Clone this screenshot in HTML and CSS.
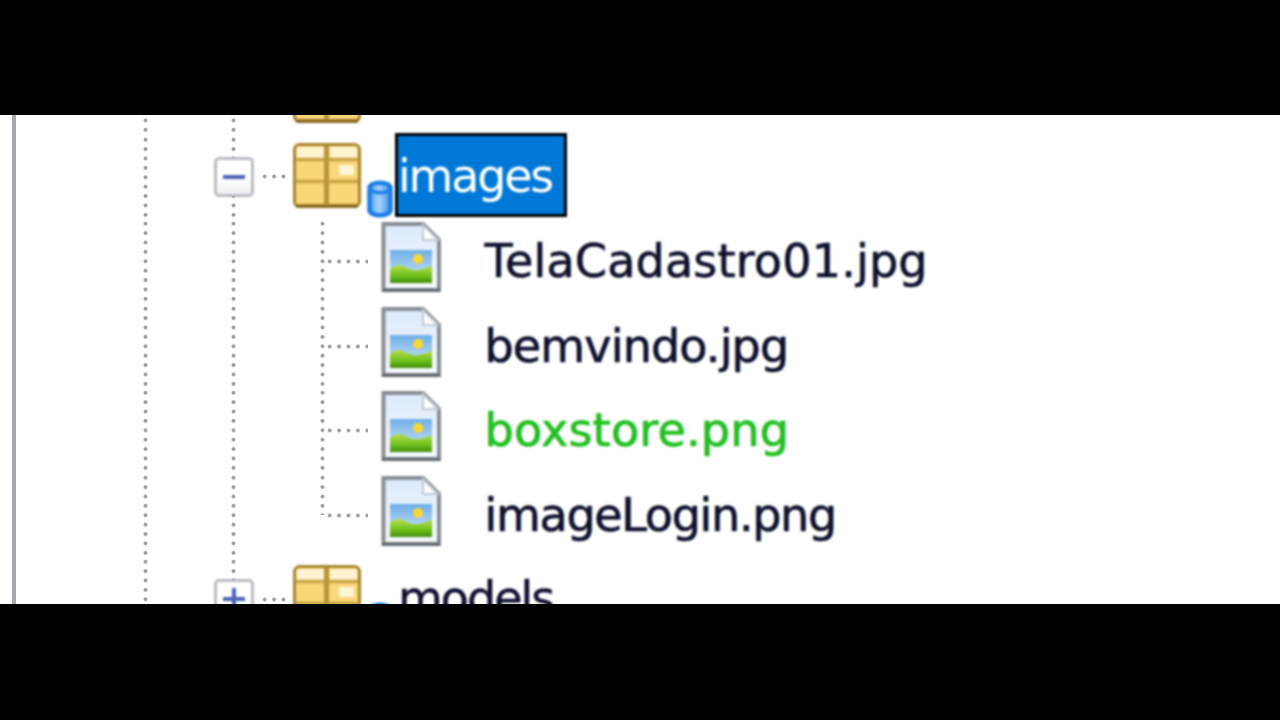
FILE: index.html
```html
<!DOCTYPE html>
<html lang="pt">
  <head>
    <meta charset="UTF-8" />
    <title>images</title>
    <link rel="stylesheet" href="styles.css">
  </head>

  <body>
    <svg class="defs" width="0" height="0" aria-hidden="true">
      <defs>
        <linearGradient id="sheet" x1="0" y1="0" x2="0" y2="1">
          <stop offset="0" stop-color="#dbeafb"/>
          <stop offset="1" stop-color="#f7f9fc"/>
        </linearGradient>
        <linearGradient id="sky" x1="0" y1="0" x2="0" y2="1">
          <stop offset="0" stop-color="#6eaee8"/>
          <stop offset="1" stop-color="#d6eaf8"/>
        </linearGradient>
        <linearGradient id="grass" x1="0" y1="0" x2="0" y2="1">
          <stop offset="0" stop-color="#b5e04a"/>
          <stop offset="0.6" stop-color="#6fc01c"/>
          <stop offset="1" stop-color="#3f8c0c"/>
        </linearGradient>
        <linearGradient id="can" x1="0" y1="0" x2="1" y2="0">
          <stop offset="0" stop-color="#4a9cee"/>
          <stop offset="0.45" stop-color="#a8d4f8"/>
          <stop offset="1" stop-color="#3f94ea"/>
        </linearGradient>
      </defs>
      <symbol id="folder" viewBox="0 0 68 65">
        <rect x="1.500" y="1.500" width="65" height="62" rx="5" fill="#f9d678" stroke="#a5852f" stroke-width="3"/>
        <path d="M3 63H65" stroke="#86691c" stroke-width="3.500"/>
        <rect x="4" y="4" width="28" height="11" fill="#fff3d2"/>
        <rect x="37" y="4" width="27" height="11" fill="#fff3d2"/>
        <path d="M3 16.500H65M3 38.500H65" stroke="#c9a544" stroke-width="3.500" fill="none"/>
        <path d="M33.500 3V62" stroke="#b8943a" stroke-width="5" fill="none"/>
        <rect x="46" y="22" width="15" height="10" fill="#fff6d8"/>
      </symbol>
      <symbol id="cylinder" viewBox="0 0 26 38">
        <path d="M2.500 8C2.500 1 23.500 1 23.500 8V30C23.500 37 2.500 37 2.500 30Z" fill="url(#can)" stroke="#1c7de6" stroke-width="4.500"/>
        <path d="M3 9C8 14 18 14 24 9" fill="none" stroke="#1c7de6" stroke-width="3.500"/>
      </symbol>
      <symbol id="picture" viewBox="0 0 60 70">
        <path d="M2.500 2H42L58 18V68H2.500Z" fill="url(#sheet)" stroke="#878d94" stroke-width="4"/>
        <path d="M1 68.500H59" stroke="#646970" stroke-width="3.500"/>
        <path d="M42 3V18H57Z" fill="#fff" stroke="#c4c9cf" stroke-width="2"/>
        <rect x="9" y="28" width="42" height="33" fill="url(#sky)"/>
        <circle cx="37" cy="37" r="5" fill="#f7d92e"/>
        <path d="M9 47C16 41 22 43 28 47C35 50 43 47 51 44V61H9Z" fill="url(#grass)"/>
      </symbol>
    </svg>

    <main class="panel">
      <div class="tree">
        <!-- carpeta anterior, solo asoma por arriba -->
        <div class="row">
          <span class="guide"></span>
          <span class="expander"></span>
          <span class="folder"><svg class="icon"><use href="#folder"/></svg></span>
        </div>

        <div class="row">
          <span class="guide"></span>
          <span class="expander">
            <span class="toggle"><span class="minus"></span></span>
            <span class="stub"></span>
          </span>
          <span class="folder">
            <svg class="icon"><use href="#folder"/></svg>
            <svg class="badge"><use href="#cylinder"/></svg>
          </span>
          <span class="label selected">images</span>
        </div>

        <div class="row">
          <span class="guide"></span>
          <span class="guide"></span>
          <span class="branch"></span>
          <svg class="file"><use href="#picture"/></svg>
          <span class="name name-tela">TelaCadastro01.jpg</span>
        </div>
        <div class="row">
          <span class="guide"></span>
          <span class="guide"></span>
          <span class="branch"></span>
          <svg class="file"><use href="#picture"/></svg>
          <span class="name name-bem">bemvindo.jpg</span>
        </div>
        <div class="row">
          <span class="guide"></span>
          <span class="guide"></span>
          <span class="branch"></span>
          <svg class="file"><use href="#picture"/></svg>
          <span class="name name-box added">boxstore.png</span>
        </div>
        <div class="row">
          <span class="guide"></span>
          <span class="guide"></span>
          <span class="branch last"></span>
          <svg class="file"><use href="#picture"/></svg>
          <span class="name name-login">imageLogin.png</span>
        </div>

        <div class="row">
          <span class="guide"></span>
          <span class="expander end">
            <span class="toggle"><span class="minus"></span><span class="plus"></span></span>
            <span class="stub"></span>
          </span>
          <span class="folder">
            <svg class="icon"><use href="#folder"/></svg>
            <svg class="badge"><use href="#cylinder"/></svg>
          </span>
          <span class="label">models</span>
        </div>
      </div>
    </main>
  </body>
</html>
```

FILE: styles.css
```css
html {
  box-sizing: border-box;
  font-family: "DejaVu Sans", Verdana, sans-serif;
}

*,
*:before,
*:after {
  box-sizing: inherit;
}

body {
  margin: 0;
  height: 720px;
  background-color: #000;
  overflow: hidden;
}

.defs {
  position: absolute;
}

/* zona blanca entre las dos franjas negras */
.panel {
  margin-top: 115px;
  height: 489px;
  padding-left: 12px;
  background-color: #fff;
  overflow: hidden;
}

.tree {
  display: flow-root;
  height: 100%;
  border-left: 4px solid #a6a9ae;
  padding-left: 126.5px;
}

.row {
  display: flex;
  height: 84.5px;
}

.row:first-child {
  margin-top: -65px;
}

/* lineas punteadas del arbol */
.guide,
.expander,
.branch {
  background-image: radial-gradient(circle, #9a9ea4 1.2px, transparent 2.6px);
  background-size: 5px 9.4px;
  background-repeat: repeat-y;
}

.guide {
  flex: 0 0 88.5px;
}

.expander {
  flex: 0 0 62px;
  display: flex;
  align-items: center;
}

.expander.end {
  background-image: none;
  position: relative;
}

.expander.end:before {
  content: "";
  position: absolute;
  left: 0;
  top: 0;
  width: 5px;
  height: 24px;
  background-image: radial-gradient(circle, #9a9ea4 1.2px, transparent 2.6px);
  background-size: 5px 9.4px;
}

.toggle {
  flex: 0 0 40px;
  height: 40px;
  margin-left: -17.5px;
  display: flex;
  align-items: center;
  justify-content: center;
  position: relative;
  background: linear-gradient(#fff, #fff 55%, #f0f0f3);
  border: 3px solid #b9bcc1;
  border-radius: 5px;
  filter: blur(0.8px);
}

.minus {
  width: 22px;
  height: 4px;
  background-color: #4a63b5;
}

.plus {
  position: absolute;
  left: 15px;
  top: 6px;
  width: 4px;
  height: 22px;
  background-color: #4a63b5;
}

.stub {
  flex: 0 0 26px;
  height: 5px;
  margin-left: 6px;
  background-image: radial-gradient(circle, #9a9ea4 1.2px, transparent 2.6px);
  background-size: 9.4px 5px;
  background-repeat: repeat-x;
}

.folder {
  flex: 0 0 68px;
  position: relative;
  padding-top: 8px;
}

.icon {
  display: block;
  width: 68px;
  height: 65px;
  filter: blur(1px);
}

/* el cilindro azul va encima de la esquina de la carpeta */
.badge {
  position: absolute;
  left: 74px;
  top: 45px;
  width: 26px;
  height: 38px;
  filter: blur(0.8px);
}

.label {
  align-self: flex-start;
  margin-left: 37px;
  margin-top: 11px;
  font-size: 46px;
  line-height: 60px;
  letter-spacing: -2px;
  color: #10102e;
  white-space: nowrap;
  -webkit-text-stroke: 0.5px currentColor;
  filter: blur(0.8px);
}

.label.selected {
  margin-left: 34px;
  margin-top: -2px;
  width: 172px;
  height: 84px;
  padding: 10px 0 0 0;
  border: 3px solid #000;
  background-color: #0078d7;
  color: #fff;
  letter-spacing: -2.2px;
  -webkit-text-stroke: 0;
}

.branch {
  flex: 0 0 61px;
  position: relative;
}

.branch:after {
  content: "";
  position: absolute;
  left: 5px;
  right: 13px;
  top: 40px;
  height: 5px;
  background-image: radial-gradient(circle, #9a9ea4 1.2px, transparent 2.6px);
  background-size: 9.4px 5px;
  background-repeat: repeat-x;
}

.branch.last {
  background-image: none;
}

.branch.last:before {
  content: "";
  position: absolute;
  left: 0;
  top: 0;
  width: 5px;
  height: 42px;
  background-image: radial-gradient(circle, #9a9ea4 1.2px, transparent 2.6px);
  background-size: 5px 9.4px;
}

.file {
  flex: 0 0 60px;
  width: 60px;
  height: 70px;
  margin-top: 3px;
  filter: blur(1px);
}

.name {
  align-self: center;
  margin-left: 44px;
  font-size: 46px;
  line-height: 60px;
  color: #10102e;
  white-space: nowrap;
  -webkit-text-stroke: 0.5px currentColor;
  text-shadow: -1px 0 #ffe7b5, 1px 0 #a9d6ff;
  filter: blur(0.8px);
}

/* el ancho de cada nombre en la captura no es uniforme */
.name-tela {
  letter-spacing: 0.2px;
}

.name-bem {
  letter-spacing: -0.83px;
}

.name-box {
  letter-spacing: 0.25px;
}

.name-login {
  letter-spacing: -1.3px;
}

.name.added {
  color: #1fc01f;
}
```
